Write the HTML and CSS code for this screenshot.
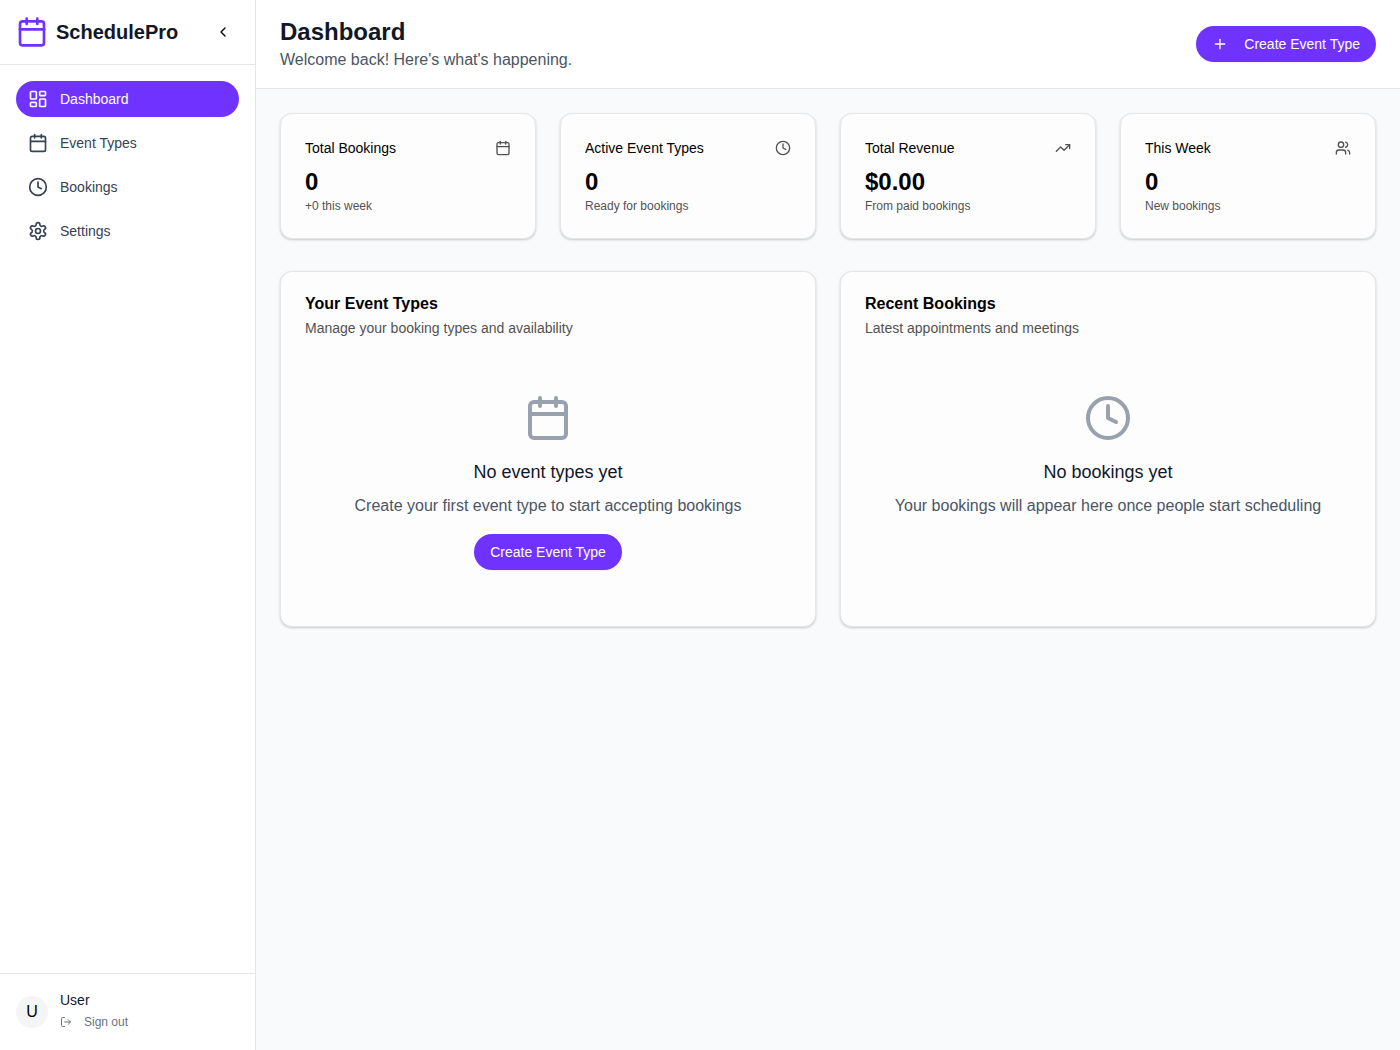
FILE: index.html
```html
<!DOCTYPE html>
<html lang="en">
<head>
  <meta charset="utf-8">
  <meta name="viewport" content="width=device-width, initial-scale=1">
  <title>Dashboard - SchedulePro</title>
  <link rel="stylesheet" href="styles.css">
</head>
<body>
  <svg class="sprite" aria-hidden="true">
    <symbol id="calendar" viewBox="0 0 24 24"><path d="M8 2v4"/><path d="M16 2v4"/><rect width="18" height="18" x="3" y="4" rx="2"/><path d="M3 10h18"/></symbol>
    <symbol id="clock" viewBox="0 0 24 24"><circle cx="12" cy="12" r="10"/><path d="M12 6v6l4 2"/></symbol>
  </svg>
  <div class="app">
    <aside class="sidebar">
      <div class="brand">
        <svg class="icon icon-xl brand-mark"><use href="#calendar"/></svg>
        <span class="brand-name">SchedulePro</span>
        <button class="collapse" type="button" aria-label="Collapse sidebar">
          <svg class="icon icon-sm" viewBox="0 0 24 24"><path d="m15 18-6-6 6-6"/></svg>
        </button>
      </div>
      <nav class="nav">
        <a class="nav-link active" href="#dashboard" aria-current="page">
          <svg class="icon icon-md" viewBox="0 0 24 24"><rect width="7" height="9" x="3" y="3" rx="1"/><rect width="7" height="5" x="14" y="3" rx="1"/><rect width="7" height="9" x="14" y="12" rx="1"/><rect width="7" height="5" x="3" y="16" rx="1"/></svg>
          Dashboard
        </a>
        <a class="nav-link" href="#event-types"><svg class="icon icon-md"><use href="#calendar"/></svg>Event Types</a>
        <a class="nav-link" href="#bookings"><svg class="icon icon-md"><use href="#clock"/></svg>Bookings</a>
        <a class="nav-link" href="#settings">
          <svg class="icon icon-md" viewBox="0 0 24 24"><path d="M12.22 2h-.44a2 2 0 0 0-2 2v.18a2 2 0 0 1-1 1.73l-.43.25a2 2 0 0 1-2 0l-.15-.08a2 2 0 0 0-2.73.73l-.22.38a2 2 0 0 0 .73 2.73l.15.1a2 2 0 0 1 1 1.72v.51a2 2 0 0 1-1 1.74l-.15.09a2 2 0 0 0-.73 2.73l.22.38a2 2 0 0 0 2.73.73l.15-.08a2 2 0 0 1 2 0l.43.25a2 2 0 0 1 1 1.73V20a2 2 0 0 0 2 2h.44a2 2 0 0 0 2-2v-.18a2 2 0 0 1 1-1.73l.43-.25a2 2 0 0 1 2 0l.15.08a2 2 0 0 0 2.73-.73l.22-.39a2 2 0 0 0-.73-2.73l-.15-.08a2 2 0 0 1-1-1.74v-.5a2 2 0 0 1 1-1.74l.15-.09a2 2 0 0 0 .73-2.73l-.22-.38a2 2 0 0 0-2.73-.73l-.15.08a2 2 0 0 1-2 0l-.43-.25a2 2 0 0 1-1-1.73V4a2 2 0 0 0-2-2z"/><circle cx="12" cy="12" r="3"/></svg>
          Settings
        </a>
      </nav>
      <div class="account">
        <span class="avatar">U</span>
        <div class="account-text">
          <span class="account-name">User</span>
          <button class="sign-out" type="button">
            <svg class="icon icon-xs" viewBox="0 0 24 24"><path d="M9 21H5a2 2 0 0 1-2-2V5a2 2 0 0 1 2-2h4"/><path d="m16 17 5-5-5-5"/><path d="M21 12H9"/></svg>
            Sign out
          </button>
        </div>
      </div>
    </aside>

    <div class="page">
      <header class="page-header">
        <div>
          <h1 class="page-title">Dashboard</h1>
          <p class="page-subtitle">Welcome back! Here's what's happening.</p>
        </div>
        <button class="button" type="button">
          <svg class="icon icon-sm" viewBox="0 0 24 24"><path d="M5 12h14"/><path d="M12 5v14"/></svg>
          Create Event Type
        </button>
      </header>

      <main class="content">
        <section class="stats" aria-label="Statistics">
          <article class="card stat">
            <div class="stat-head"><h2 class="stat-title">Total Bookings</h2><svg class="icon icon-sm"><use href="#calendar"/></svg></div>
            <div><p class="stat-value">0</p><p class="stat-note">+0 this week</p></div>
          </article>
          <article class="card stat">
            <div class="stat-head"><h2 class="stat-title">Active Event Types</h2><svg class="icon icon-sm"><use href="#clock"/></svg></div>
            <div><p class="stat-value">0</p><p class="stat-note">Ready for bookings</p></div>
          </article>
          <article class="card stat">
            <div class="stat-head"><h2 class="stat-title">Total Revenue</h2><svg class="icon icon-sm" viewBox="0 0 24 24"><path d="M22 7 13.5 15.5 8.5 10.5 2 17"/><path d="M16 7h6v6"/></svg></div>
            <div><p class="stat-value">$0.00</p><p class="stat-note">From paid bookings</p></div>
          </article>
          <article class="card stat">
            <div class="stat-head"><h2 class="stat-title">This Week</h2><svg class="icon icon-sm" viewBox="0 0 24 24"><path d="M16 21v-2a4 4 0 0 0-4-4H6a4 4 0 0 0-4 4v2"/><circle cx="9" cy="7" r="4"/><path d="M22 21v-2a4 4 0 0 0-3-3.87"/><path d="M16 3.13a4 4 0 0 1 0 7.75"/></svg></div>
            <div><p class="stat-value">0</p><p class="stat-note">New bookings</p></div>
          </article>
        </section>

        <div class="panels">
          <section class="card panel">
            <div class="panel-head">
              <h2 class="panel-title">Your Event Types</h2>
              <p class="panel-note">Manage your booking types and availability</p>
            </div>
            <div class="empty">
              <svg class="icon icon-2xl"><use href="#calendar"/></svg>
              <h3 class="empty-title">No event types yet</h3>
              <p class="empty-text">Create your first event type to start accepting bookings</p>
              <button class="button" type="button">Create Event Type</button>
            </div>
          </section>
          <section class="card panel">
            <div class="panel-head">
              <h2 class="panel-title">Recent Bookings</h2>
              <p class="panel-note">Latest appointments and meetings</p>
            </div>
            <div class="empty">
              <svg class="icon icon-2xl"><use href="#clock"/></svg>
              <h3 class="empty-title">No bookings yet</h3>
              <p class="empty-text">Your bookings will appear here once people start scheduling</p>
            </div>
          </section>
        </div>
      </main>
    </div>
  </div>
</body>
</html>
```
FILE: styles.css
```css
:root {
  --primary: #7033ff;
  --border: #e4e6ea;
  --ink: #101828;
  --muted: #4a5565;
  --note: #525252;
}

*, *::before, *::after { box-sizing: border-box; }

body {
  margin: 0;
  background: #f9fafc;
  color: #000;
  font: 16px/24px "Liberation Sans", Arial, sans-serif;
}

h1, h2, h3, p { margin: 0; }
button { border: 0; background: none; font: inherit; color: inherit; cursor: pointer; }
a { color: inherit; text-decoration: none; }

.sprite { display: none; }

.icon {
  flex: none;
  fill: none;
  stroke: currentColor;
  stroke-width: 2;
  stroke-linecap: round;
  stroke-linejoin: round;
}
.icon-xs { width: 12px; height: 12px; }
.icon-sm { width: 16px; height: 16px; }
.icon-md { width: 20px; height: 20px; }
.icon-xl { width: 32px; height: 32px; }
.icon-2xl { width: 48px; height: 48px; }

.app { display: flex; min-height: 100vh; }

/* Sidebar */
.sidebar {
  display: flex;
  flex: none;
  flex-direction: column;
  width: 256px;
  background: #fff;
  border-right: 1px solid var(--border);
}
.brand {
  display: flex;
  align-items: center;
  gap: 8px;
  padding: 16px;
  border-bottom: 1px solid var(--border);
}
.brand-mark { color: var(--primary); }
.brand-name { flex: 1; color: var(--ink); font-size: 20px; font-weight: 700; line-height: 28px; }
.collapse { display: grid; place-items: center; width: 32px; height: 32px; padding: 0; }

.nav { display: flex; flex: 1; flex-direction: column; gap: 8px; padding: 16px; }
.nav-link {
  display: flex;
  align-items: center;
  gap: 12px;
  padding: 8px 12px;
  border-radius: 18px;
  color: #364153;
  font-size: 14px;
  line-height: 20px;
}
.nav-link.active { background: var(--primary); color: #fff; }

.account {
  display: flex;
  align-items: center;
  gap: 12px;
  padding: 16px;
  border-top: 1px solid var(--border);
}
.avatar {
  display: grid;
  place-items: center;
  width: 32px;
  height: 32px;
  border-radius: 50%;
  background: #f5f5f5;
}
.account-text { display: flex; flex-direction: column; align-items: flex-start; }
.account-name { color: var(--ink); font-size: 14px; line-height: 20px; }
.sign-out {
  display: flex;
  align-items: center;
  gap: 12px;
  height: 24px;
  padding: 0;
  color: #6a7282;
  font-size: 12px;
  line-height: 16px;
}

/* Page */
.page { flex: 1; min-width: 0; }
.page-header {
  display: flex;
  align-items: center;
  justify-content: space-between;
  padding: 16px 24px;
  background: #fff;
  border-bottom: 1px solid var(--border);
}
.page-title { color: var(--ink); font-size: 24px; line-height: 32px; }
.page-subtitle { color: var(--muted); }

.button {
  display: inline-flex;
  align-items: center;
  gap: 16px;
  padding: 8px 16px;
  border-radius: 18px;
  background: var(--primary);
  box-shadow: 0 1px 2px rgb(0 0 0 / 6%);
  color: #fff;
  font-size: 14px;
  line-height: 20px;
}

.content { display: flex; flex-direction: column; gap: 32px; padding: 24px; }
.stats { display: grid; grid-template-columns: repeat(4, 1fr); gap: 24px; }
.panels { display: grid; grid-template-columns: repeat(2, 1fr); gap: 24px; }

.card {
  display: flex;
  flex-direction: column;
  padding: 24px;
  background: #fdfdfd;
  border: 1px solid var(--border);
  border-radius: 12px;
  box-shadow: 0 1px 3px rgb(0 0 0 / 10%), 0 1px 2px rgb(0 0 0 / 10%);
}

.stat { gap: 8px; }
.stat-head { display: flex; align-items: center; justify-content: space-between; color: var(--note); }
.stat-title { color: #000; font-size: 14px; font-weight: 400; line-height: 20px; }
.stat-value { font-size: 24px; font-weight: 700; line-height: 32px; }
.stat-note { color: var(--note); font-size: 12px; line-height: 16px; }

.panel { gap: 24px; }
.panel-head { display: flex; flex-direction: column; gap: 6px; }
.panel-title { font-size: 16px; line-height: 16px; }
.panel-note { color: var(--note); font-size: 14px; line-height: 20px; }

.empty {
  display: flex;
  flex-direction: column;
  align-items: center;
  padding: 32px 0;
  color: #99a1af;
  text-align: center;
}
.empty-title { margin: 16px 0 8px; color: var(--ink); font-size: 18px; font-weight: 400; line-height: 28px; }
.empty-text { color: var(--muted); }
.empty .button { margin-top: 16px; }

@media (max-width: 1000px) {
  .stats { grid-template-columns: repeat(2, 1fr); }
  .panels { grid-template-columns: 1fr; }
}
```
